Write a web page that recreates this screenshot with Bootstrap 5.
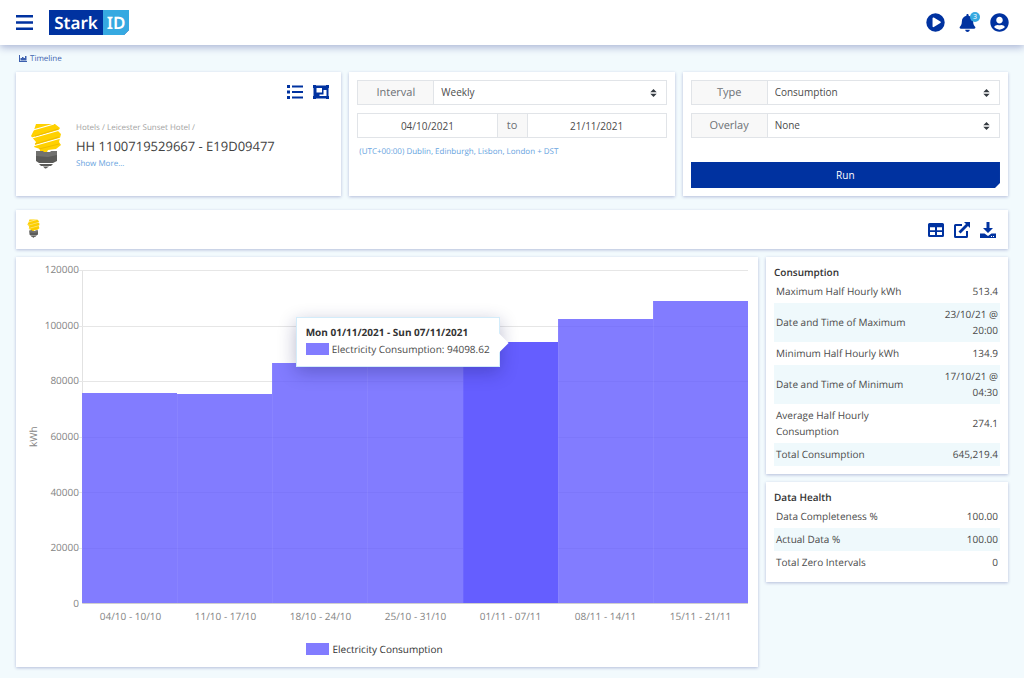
<!DOCTYPE html>
<html lang="en">
<head>
<meta charset="utf-8">
<meta name="viewport" content="width=device-width, initial-scale=1">
<title>Stark ID - Timeline</title>
<link rel="stylesheet" href="https://cdn.jsdelivr.net/npm/bootstrap@5.3.0/dist/css/bootstrap.min.css">
<style>
  :root { --brand: #0032a0; --line: #e1e4e8; --bar: rgba(99, 91, 255, .8); }
  body { background: #f2fafd; color: #4b4b4b; font-family: "Open Sans", "Noto Sans", sans-serif; font-size: 10px; line-height: 16px; text-rendering: geometricPrecision; }
  svg { display: block; fill: currentColor; }
  .topbar { height: 45px; background: #fff; box-shadow: 0 2px 8px rgba(0, 20, 120, .32); padding: 0 15px 0 16px; }
  .top-icons { gap: 14px; }
  .tool-icons { gap: 10px; }
  .icon-btn { border: 0; background: none; padding: 0; color: var(--brand); position: relative; }
  .logo { font-family: "Noto Sans", sans-serif; font-weight: 600; font-size: 17px; line-height: 25px; color: #fff; text-decoration: none;
    background: var(--brand); clip-path: polygon(0 0, 100% 0, 100% 20px, calc(100% - 5px) 100%, 0 100%); }
  .logo .logo-id { background: #36a9e1; width: 26px; text-align: center; }
  .logo .logo-name { width: 54px; text-align: center; }
  .count { position: absolute; top: -2px; right: -4px; width: 10px; height: 10px; border-radius: 50%; background: #36a9e1; color: #fff; font-size: 7px; line-height: 10px; }
  .page { padding: 0 16px 11px; }
  .crumb { color: #3c5fae; font-size: 8px; line-height: 27px; padding-left: 3px; text-decoration: none; }
  .crumb svg { margin-right: 3px; }
  .panel { background: #fff; box-shadow: 0 1px 3px rgba(0, 20, 120, .26); padding: 8px; }
  .meter-tools { padding: 5px 4px 0 0; }
  .meter { padding: 4px 0 0 6px; gap: 14px; }
  .tiny { font-size: 8px; }
  .path-text { color: #a2a2a2; }
  .soft-link { color: #66a3e0; text-decoration: none; }
  .zone { margin: 6px 0 0 2px; }
  .meter-name { font-size: 13px; line-height: 20px; margin: 0; font-weight: 400; color: #424242; }
  .input-group-text, .form-select, .form-control { height: 25px; border-radius: 0 !important; border-color: var(--line); padding: 0 7px; line-height: 23px; color: #4b4b4b; font-size: 10px; }
  .input-group-text { background-color: #f8f8f8; color: #6c7075; font-size: 11px; justify-content: center; width: 77px; }
  .input-group-text.to { width: 31px; }
  .form-select { background-image: url("data:image/svg+xml,%3csvg xmlns='http://www.w3.org/2000/svg' viewBox='0 0 4 5'%3e%3cpath fill='%23343a40' d='M2 0L0 2h4zm0 5L0 3h4z'/%3e%3c/svg%3e"); background-size: 7px 8px; background-position: right 9px center; }
  .run { background: var(--brand); color: #fff; border-radius: 0; font-size: 10px; line-height: 26px; padding: 0; border: 0;
    clip-path: polygon(0 0, 100% 0, 100% calc(100% - 5px), calc(100% - 5px) 100%, 0 100%); }
  .toolbar { margin: 14px 0 8px; height: 39px; }
  .toolbar-bulb { margin: 0 0 3px 3px; }
  .stats-title { font-size: 10px; line-height: 14px; font-weight: 600; margin: 0 0 1px; color: #333; }
  .stats { color: #4b4b4b; }
  .stats > tbody > tr > * { border: 0; padding: 3px 2px 4px; font-weight: 400; color: inherit; }
  .stats > tbody > tr:nth-child(even) > * { background: #eff9fc; }
  .stats td { text-align: right; width: 34%; }
  .chart { padding: 13px 10px 10px 9px; }
  .axis-title { writing-mode: vertical-rl; transform: rotate(180deg); color: #858585; line-height: 16px; text-align: center; }
  .y-axis { color: #858585; line-height: 14px; margin: -8px 3px -6px 0; width: 38px; text-align: right; }
  .plot { display: grid; height: 334px; border-left: 1px solid #e2e2e2; border-bottom: 1px solid #cfcfcf; }
  .plot > * { grid-area: 1 / 1; }
  .gridlines { margin-left: -4px; }
  .gridlines div { border-top: 1px solid #e6e6e6; }
  .bars { position: relative; margin-left: -1px; }
  .bar { position: relative; flex: 1 1 0; background: var(--bar); border-left: 1px solid rgba(255, 255, 255, .06); }
  .bar.active { background: #655eff; }
  .x-axis { color: #858585; line-height: 16px; margin: 4px 0 0 58px; }
  .swatch { width: 23px; height: 12px; background: #827cff; margin-right: 3px; }
  .legend-row { color: #333; margin: 17px 24px 0 0; }
  .tip { position: absolute; z-index: 2; top: -25px; right: calc(50% + 11px); height: 50px; padding: 6px 9px; background: #fff; border: 1px solid #d3ecfa; white-space: nowrap; box-shadow: 0 5px 18px rgba(20, 20, 90, .3); }
  .tip-title { color: #333; font-weight: 700; }
  .tip-value { line-height: 18px; }
  .tip::after { content: ""; position: absolute; right: -10px; top: 15px; width: 10px; height: 20px; background: #fff; clip-path: polygon(0 0, 100% 50%, 0 100%); }
</style>
</head>
<body>
<header class="topbar d-flex align-items-center">
  <button class="icon-btn" aria-label="Menu"><svg width="17" height="15" viewBox="0 0 17 15"><path d="M0 0h17v2.500H0zM0 6.200h17v2.500H0zM0 12.400h17v2.500H0z"/></svg></button>
  <a class="logo d-flex ms-3" href="#"><span class="logo-name">Stark</span><span class="logo-id">ID</span></a>
  <div class="top-icons ms-auto d-flex align-items-center">
    <button class="icon-btn" aria-label="Play"><svg width="19" height="19" viewBox="0 0 512 512"><path fill-rule="evenodd" d="M256 8a248 248 0 1 0 0 496 248 248 0 0 0 0-496zM176 140c0-18 19-27 35-19l176 108c16 9 16 33 0 42L211 379c-16 9-35-1-35-20z"/></svg></button>
    <button class="icon-btn" aria-label="Notifications"><svg width="17" height="18" viewBox="0 0 448 512"><path d="M224 512c35.320 0 63.970-28.650 63.970-64H160.030c0 35.350 28.650 64 63.970 64zm215.390-149.710c-19.320-20.760-55.470-51.990-55.470-154.290 0-77.700-54.480-139.900-127.940-155.160V32c0-17.670-14.320-32-31.980-32s-31.980 14.330-31.980 32v20.840C118.560 68.100 64.080 130.300 64.080 208c0 102.300-36.150 133.530-55.470 154.290-6 6.450-8.660 14.160-8.610 21.710.11 16.400 12.980 32 32.100 32h383.800c19.120 0 32-15.600 32.100-32 .05-7.550-2.610-15.270-8.610-21.710z"/></svg><span class="count">3</span></button>
    <button class="icon-btn" aria-label="Account"><svg width="19" height="19" viewBox="0 0 496 512"><path d="M248 8C111 8 0 119 0 256s111 248 248 248 248-111 248-248S385 8 248 8zm0 96c48.600 0 88 39.400 88 88s-39.400 88-88 88-88-39.400-88-88 39.400-88 88-88zm0 344c-58.700 0-111.300-26.600-146.500-68.200 18.800-35.400 55.600-59.800 98.500-59.800 2.400 0 4.800.4 7.100 1.100 13 4.200 26.600 6.900 40.900 6.900s28-2.700 40.900-6.900c2.300-.7 4.700-1.100 7.100-1.100 42.900 0 79.700 24.400 98.500 59.800C359.300 421.400 306.700 448 248 448z"/></svg></button>
  </div>
</header>

<svg width="0" height="0" class="position-absolute" aria-hidden="true">
  <symbol id="bulb" viewBox="0 0 32 46">
    <path fill="#ffd100" d="M6 1h19l5 4-2 3 3 3-2 8 2 3-5 4-8 1-1 2h-7v-3l-6-2 2-5-5-6 3-6z"/>
    <path fill="none" stroke="#fff" stroke-width="1.200" d="M3 7L24 1M2 15l28-8M3 23l28-8"/>
    <path fill="none" stroke="#efbd00" stroke-width="1.200" d="M5 13l23-7M5 21l24-7M9 26l20-5"/>
    <path fill="#5b5b59" d="M6 28h6l2 1h6l2-1h5v10l-4 2H9l-3-2z"/>
    <path fill="#71716f" d="M6 28h6l2 1h6l2-1h5v4l-9 2-12-1z"/>
    <path fill="#5b5b59" d="M9 41h14l-2 2H11zM13 43.500h6l-3 2h-1z"/>
  </symbol>
</svg>

<main class="page">
  <nav><a class="crumb d-inline-flex align-items-center" href="#"><svg width="8" height="7" viewBox="0 0 16 14"><path d="M0 0h2v12h14v2H0zM3 6h3v5H3zM6 4h3v7H6zM9 6h3v5H9zM12 2h3v9h-3z"/></svg>Timeline</a></nav>

  <div class="row gx-2">
    <div class="col-4">
      <section class="panel h-100 d-flex flex-column">
        <div class="meter-tools tool-icons d-flex justify-content-end">
          <button class="icon-btn" aria-label="List"><svg width="16" height="14" viewBox="0 0 16 14"><path d="M0 0h3v3H0zM0 5.500h3v3H0zM0 11h3v3H0zM5 .5h11v2H5zM5 6h11v2H5zM5 11.500h11v2H5z"/></svg></button>
          <button class="icon-btn" aria-label="Group"><svg width="16" height="14" viewBox="0 0 16 14"><path fill-rule="evenodd" d="M0 0h3v.5h10V0h3v3h-.5v8h.5v3h-3v-.5H3v.5H0v-3h.5V3H0zM3.500 3v4.500H9V3zM10.500 5v4.500H6.500V11h7V5z"/></svg></button>
        </div>
        <div class="meter d-flex align-items-center my-auto">
          <svg width="32" height="46"><use href="#bulb"/></svg>
          <div>
            <div class="tiny path-text">Hotels / Leicester Sunset Hotel /</div>
            <h1 class="meter-name">HH 1100719529667 - E19D09477</h1>
            <a class="tiny soft-link d-block" href="#">Show More...</a>
          </div>
        </div>
      </section>
    </div>
    <div class="col-4">
      <section class="panel h-100">
        <div class="input-group mb-2">
          <label class="input-group-text" for="interval">Interval</label>
          <select class="form-select" id="interval"><option>Weekly</option></select>
        </div>
        <div class="input-group flex-nowrap">
          <input class="form-control text-center" aria-label="From date" value="04/10/2021">
          <span class="input-group-text to">to</span>
          <input class="form-control text-center" aria-label="To date" value="21/11/2021">
        </div>
        <a class="tiny soft-link zone d-block" href="#">(UTC+00:00) Dublin, Edinburgh, Lisbon, London + DST</a>
      </section>
    </div>
    <div class="col-4">
      <section class="panel h-100">
        <div class="input-group mb-2">
          <label class="input-group-text" for="type">Type</label>
          <select class="form-select" id="type"><option>Consumption</option></select>
        </div>
        <div class="input-group mb-4">
          <label class="input-group-text" for="overlay">Overlay</label>
          <select class="form-select" id="overlay"><option>None</option></select>
        </div>
        <button class="btn run w-100 d-block">Run</button>
      </section>
    </div>
  </div>

  <section class="panel toolbar d-flex align-items-center">
    <svg class="toolbar-bulb" width="13" height="19"><use href="#bulb"/></svg>
    <div class="tool-icons ms-auto d-flex align-items-center pe-1">
      <button class="icon-btn" aria-label="Table"><svg width="16" height="14" viewBox="0 0 16 14"><path fill-rule="evenodd" d="M1.500 0h13A1.500 1.500 0 0 1 16 1.500v11a1.500 1.500 0 0 1-1.500 1.500h-13A1.500 1.500 0 0 1 0 12.500v-11A1.500 1.500 0 0 1 1.500 0zM2 4.200v3h5v-3zm7 0v3h5v-3zM2 9v3h5V9zm7 0v3h5V9z"/></svg></button>
      <button class="icon-btn" aria-label="Open in new window"><svg width="16" height="16" viewBox="0 0 16 16"><path d="M10 0h6v6l-2-2-7.500 7.500-2-2L12 2zM0 3.500A1.500 1.500 0 0 1 1.500 2H8v2H2v10h10V9h2v5.500a1.500 1.500 0 0 1-1.500 1.500h-11A1.500 1.500 0 0 1 0 14.500z"/></svg></button>
      <button class="icon-btn" aria-label="Download"><svg width="16" height="16" viewBox="0 0 16 16"><path fill-rule="evenodd" d="M6.500 0h3v6H13l-5 5-5-5h3.500zM0 11.500h4.500L8 14l3.500-2.500H16V16H0zM11 14v1h1v-1zm2 0v1h1v-1z"/></svg></button>
    </div>
  </section>

  <div class="row gx-2">
    <div class="col-9">
      <section class="panel chart">
        <div class="d-flex">
          <div class="axis-title">kWh</div>
          <div class="y-axis d-flex flex-column justify-content-between ms-auto">
            <span>120000</span><span>100000</span><span>80000</span><span>60000</span><span>40000</span><span>20000</span><span>0</span>
          </div>
          <div class="plot flex-grow-1">
            <div class="gridlines d-flex flex-column">
              <div class="flex-fill"></div><div class="flex-fill"></div><div class="flex-fill"></div><div class="flex-fill"></div><div class="flex-fill"></div><div class="flex-fill"></div>
            </div>
            <div class="bars d-flex align-items-end">
              <div class="bar" style="height:63.200%"></div>
              <div class="bar" style="height:62.700%"></div>
              <div class="bar" style="height:72.100%"></div>
              <div class="bar" style="height:85.200%"></div>
              <div class="bar active" style="height:78.400%">
                <div class="tip" role="tooltip">
                  <div class="tip-title">Mon 01/11/2021 - Sun 07/11/2021</div>
                  <div class="tip-value d-flex align-items-center"><span class="swatch"></span><span>Electricity Consumption: 94098.62</span></div>
                </div>
              </div>
              <div class="bar" style="height:85.200%"></div>
              <div class="bar" style="height:90.800%"></div>
            </div>
          </div>
        </div>
        <div class="x-axis d-flex text-center">
          <span class="col">04/10 - 10/10</span><span class="col">11/10 - 17/10</span><span class="col">18/10 - 24/10</span><span class="col">25/10 - 31/10</span><span class="col">01/11 - 07/11</span><span class="col">08/11 - 14/11</span><span class="col">15/11 - 21/11</span>
        </div>
        <div class="legend-row d-flex justify-content-center align-items-center"><span class="swatch"></span>Electricity Consumption</div>
      </section>
    </div>
    <div class="col-3">
      <section class="panel mb-2">
        <h2 class="stats-title">Consumption</h2>
        <table class="table stats mb-0 align-middle">
          <tbody>
            <tr><th scope="row">Maximum Half Hourly kWh</th><td>513.4</td></tr>
            <tr><th scope="row">Date and Time of Maximum</th><td>23/10/21 @ 20:00</td></tr>
            <tr><th scope="row">Minimum Half Hourly kWh</th><td>134.9</td></tr>
            <tr><th scope="row">Date and Time of Minimum</th><td>17/10/21 @ 04:30</td></tr>
            <tr><th scope="row">Average Half Hourly Consumption</th><td>274.1</td></tr>
            <tr><th scope="row">Total Consumption</th><td>645,219.4</td></tr>
          </tbody>
        </table>
      </section>
      <section class="panel">
        <h2 class="stats-title">Data Health</h2>
        <table class="table stats mb-0 align-middle">
          <tbody>
            <tr><th scope="row">Data Completeness %</th><td>100.00</td></tr>
            <tr><th scope="row">Actual Data %</th><td>100.00</td></tr>
            <tr><th scope="row">Total Zero Intervals</th><td>0</td></tr>
          </tbody>
        </table>
      </section>
    </div>
  </div>
</main>
<script src="https://cdn.jsdelivr.net/npm/bootstrap@5.3.0/dist/js/bootstrap.bundle.min.js"></script>
</body>
</html>
